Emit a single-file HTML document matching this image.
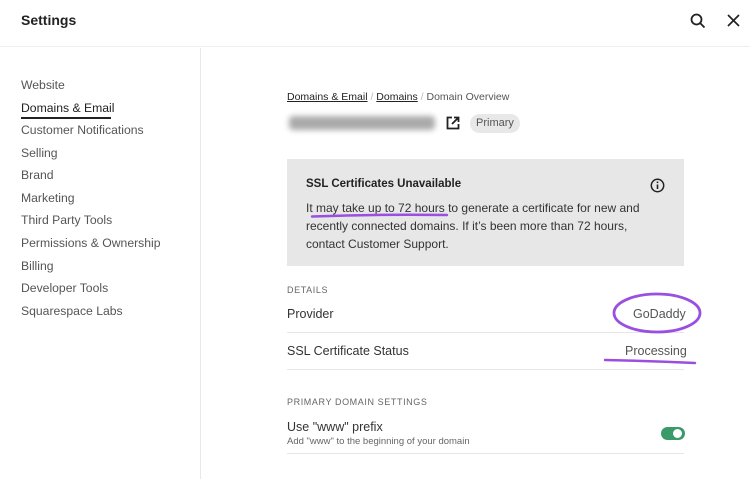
<!DOCTYPE html>
<html><head><meta charset="utf-8"><style>
*{margin:0;padding:0;box-sizing:border-box}
body{width:750px;height:479px;background:#fff;font-family:"Liberation Sans",sans-serif;color:#222;position:relative;overflow:hidden}
.hdr{position:absolute;left:0;top:0;width:750px;height:47px;border-bottom:1px solid #eee}
.hdr h1{position:absolute;left:21px;top:12px;font-size:14px;font-weight:bold;color:#222}
.side{position:absolute;left:0;top:48px;width:201px;height:431px;border-right:1px solid #e8e8e8}
.nav{position:absolute;left:21px;font-size:12.2px;color:#555}
.nav.act{color:#222}
.a{position:absolute;font-size:12.5px;color:#333}
.s{position:absolute;font-size:9px;letter-spacing:.6px;color:#666}
.line{position:absolute;left:287px;width:397px;height:1px;background:#e6e6e6}
</style></head><body>
<div class="hdr"><h1>Settings</h1>
<svg style="position:absolute;left:690px;top:13px" width="16" height="16" viewBox="0 0 16 16"><circle cx="6.5" cy="6.5" r="5" fill="none" stroke="#222" stroke-width="1.8"/><path d="M10.3 10.3L14.5 14.5" stroke="#222" stroke-width="1.8"/></svg>
<svg style="position:absolute;left:727px;top:14px" width="13" height="13" viewBox="0 0 13 13"><path d="M1 1L12 12M12 1L1 12" stroke="#222" stroke-width="1.7"/></svg>
</div>
<div class="side"></div>
<div class="nav" style="top:78px">Website</div>
<div class="nav act" style="top:101px">Domains &amp; Email</div>
<div style="position:absolute;left:21px;top:117px;width:90px;height:1.5px;background:#222"></div>
<div class="nav" style="top:123px">Customer Notifications</div>
<div class="nav" style="top:146px">Selling</div>
<div class="nav" style="top:168px">Brand</div>
<div class="nav" style="top:191px">Marketing</div>
<div class="nav" style="top:213px">Third Party Tools</div>
<div class="nav" style="top:236px">Permissions &amp; Ownership</div>
<div class="nav" style="top:259px">Billing</div>
<div class="nav" style="top:281px">Developer Tools</div>
<div class="nav" style="top:304px">Squarespace Labs</div>

<div style="position:absolute;left:287px;top:91px;font-size:10.5px;color:#222"><u>Domains &amp; Email</u> <span style="color:#bbb">/</span> <u>Domains</u> <span style="color:#bbb">/</span> <span style="color:#555">Domain Overview</span></div>
<div style="position:absolute;left:289px;top:116px;width:146px;height:14px;background:#aaa;filter:blur(3px);border-radius:4px"></div>
<svg style="position:absolute;left:446px;top:116px" width="14" height="14" viewBox="0 0 14 14"><path d="M6 1.5H1.5V12.5H12.5V8" fill="none" stroke="#222" stroke-width="1.8"/><path d="M8 1.5H12.5V6M12.5 1.5L6 8" fill="none" stroke="#222" stroke-width="1.8"/></svg>
<div style="position:absolute;left:470px;top:114px;width:50px;height:19px;border-radius:10px;background:#e8e8e8;font-size:11px;color:#555;text-align:center;line-height:19px">Primary</div>

<div style="position:absolute;left:287px;top:159px;width:397px;height:107px;background:#e7e7e7"></div>
<div style="position:absolute;left:306px;top:178px;font-size:11.5px;font-weight:bold;color:#222">SSL Certificates Unavailable</div>
<svg style="position:absolute;left:650px;top:178px" width="15" height="15" viewBox="0 0 15 15"><circle cx="7.5" cy="7.5" r="6.2" fill="none" stroke="#222" stroke-width="1.5"/><path d="M7.5 6.5V11" stroke="#222" stroke-width="1.6"/><circle cx="7.5" cy="4.3" r="0.9" fill="#222"/></svg>
<div style="position:absolute;left:306px;top:199px;width:350px;font-size:12px;line-height:18px;color:#333">It may take up to 72 hours to generate a certificate for new and recently connected domains. If it’s been more than 72 hours, contact Customer Support.</div>

<div class="s" style="top:285px;left:287px">DETAILS</div>
<div class="a" style="left:287px;top:307px">Provider</div>
<div class="a" style="left:633px;top:307px;color:#555">GoDaddy</div>
<div class="line" style="top:332px"></div>
<div class="a" style="left:287px;top:344px">SSL Certificate Status</div>
<div class="a" style="left:625px;top:344px;color:#555">Processing</div>
<div class="line" style="top:369px"></div>
<div class="s" style="top:397px;left:287px">PRIMARY DOMAIN SETTINGS</div>
<div class="a" style="left:287px;top:420px">Use "www" prefix</div>
<div style="position:absolute;left:287px;top:436px;font-size:9.5px;color:#666">Add "www" to the beginning of your domain</div>
<div style="position:absolute;left:661px;top:427px;width:24px;height:13px;border-radius:7px;background:#3a9a6a"></div>
<div style="position:absolute;left:673px;top:429px;width:9px;height:9px;border-radius:50%;background:#fff"></div>
<div class="line" style="top:453px"></div>

<svg style="position:absolute;left:0;top:0" width="750" height="479">
<path d="M312 216.5Q380 214 447 215" fill="none" stroke="#9a4fe0" stroke-width="2.5" stroke-linecap="round"/>
<ellipse cx="657" cy="313" rx="43" ry="19" fill="none" stroke="#9a4fe0" stroke-width="2.8"/>
<path d="M605 360Q650 361 695 363" fill="none" stroke="#9a4fe0" stroke-width="2.5" stroke-linecap="round"/>
</svg>
</body></html>
